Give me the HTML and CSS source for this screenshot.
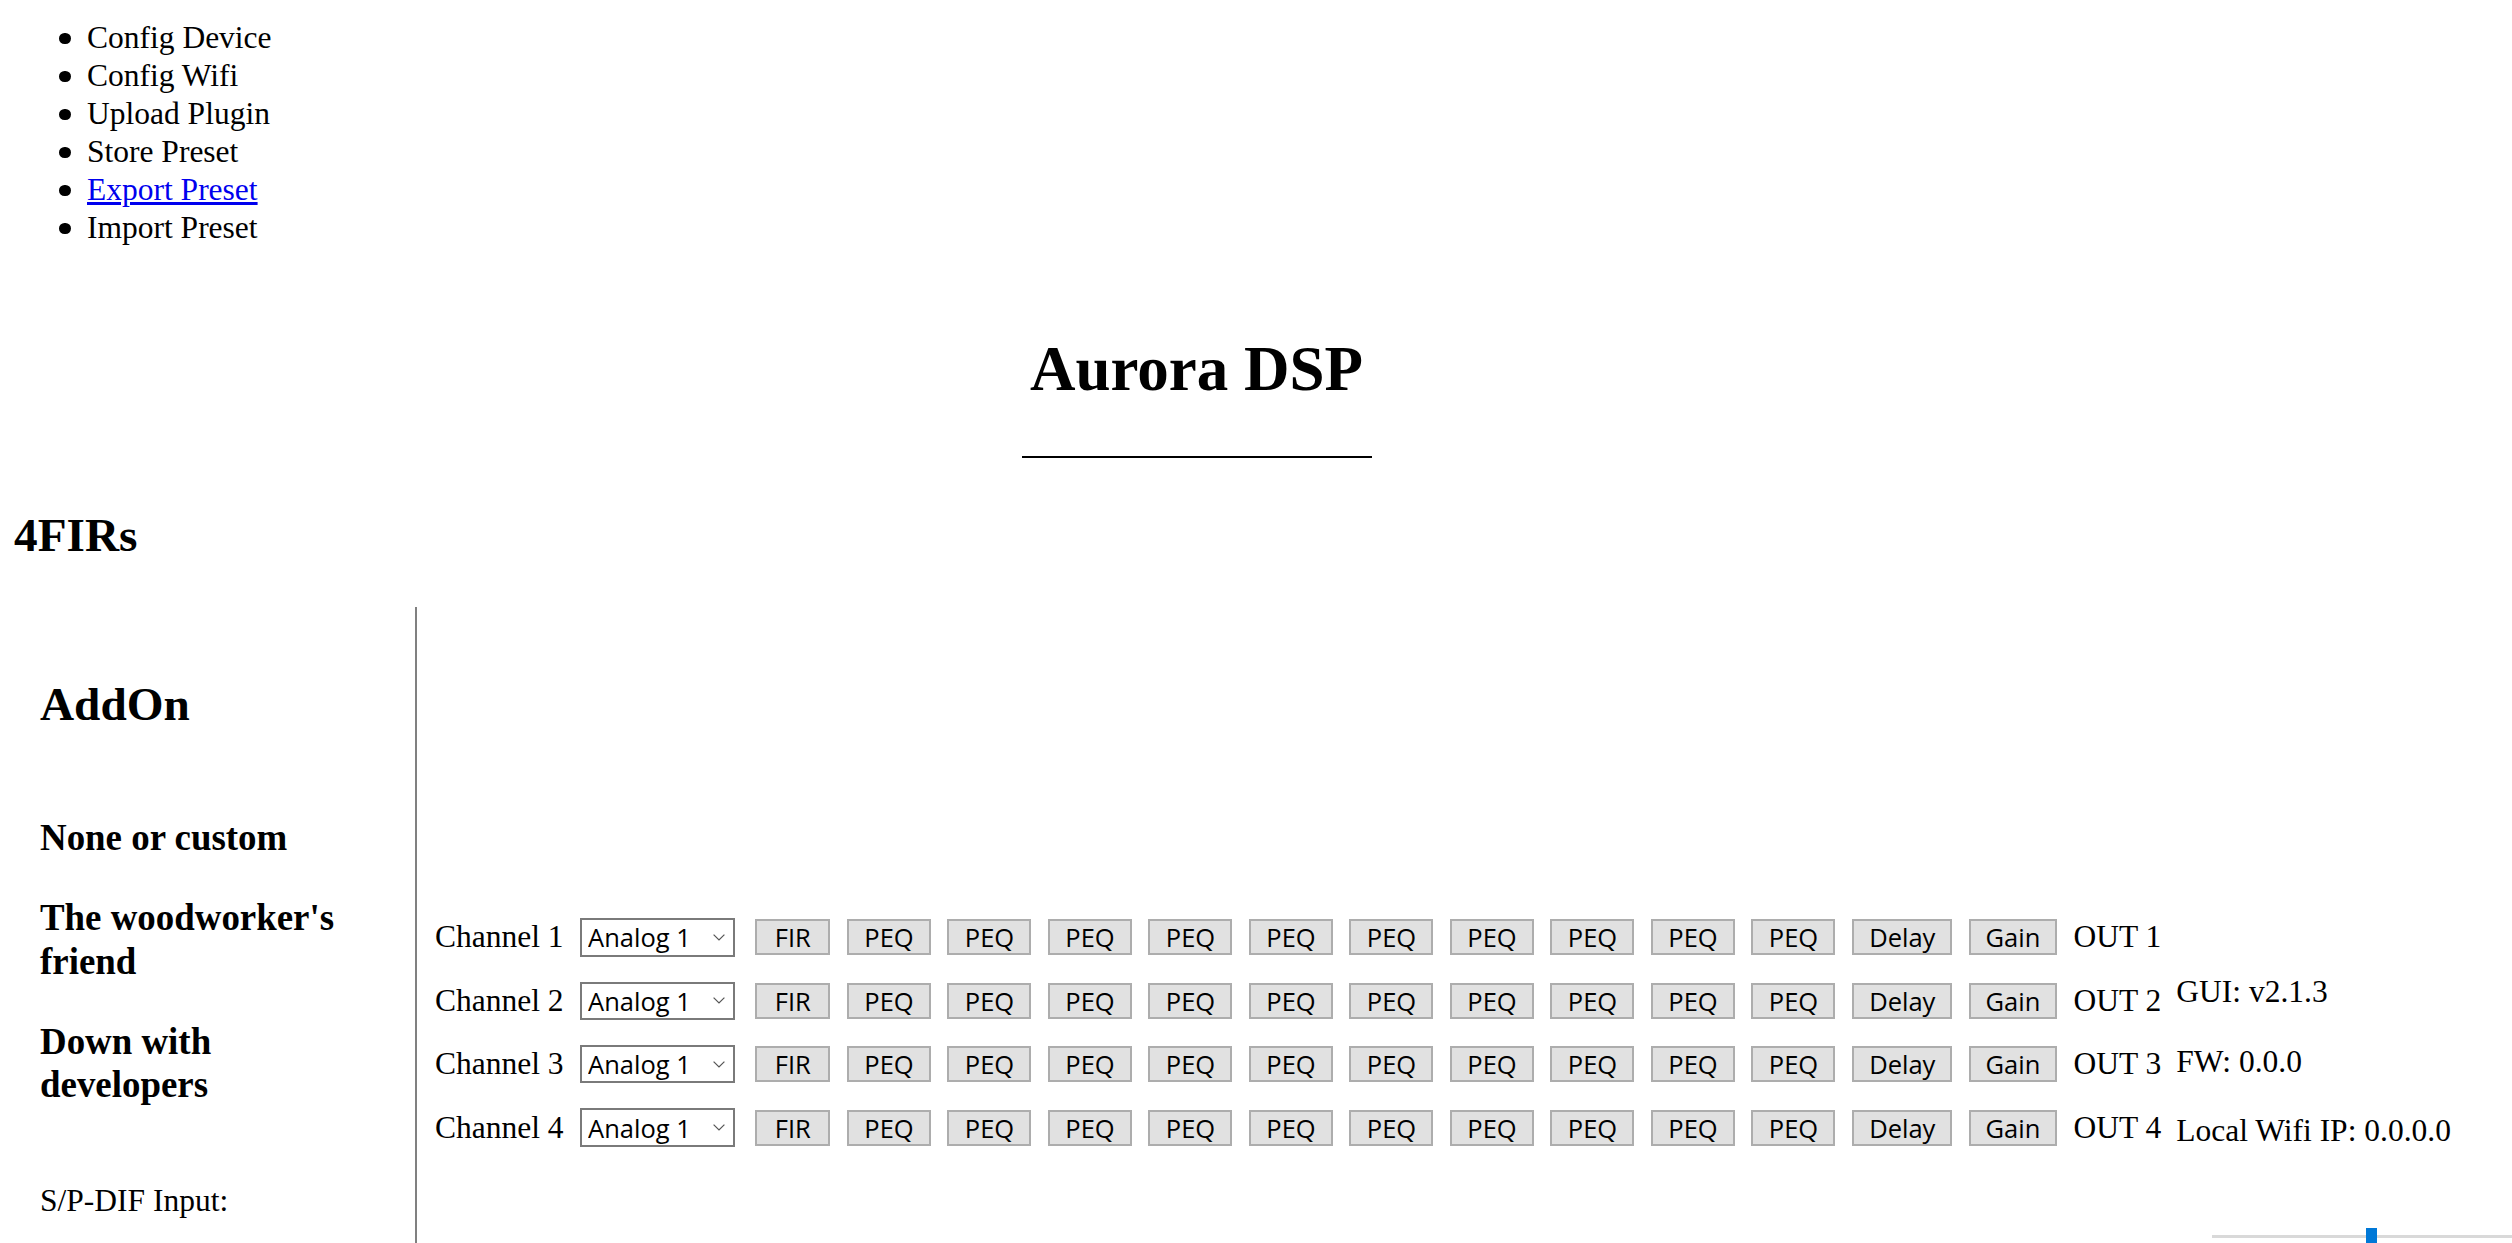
FILE: index.html
```html
<!DOCTYPE html>
<html lang="en">
<head>
<meta charset="utf-8">
<title>Aurora DSP</title>
<link rel="stylesheet" href="styles.css">
</head>
<body>
<ul class="menu">
  <li>Config Device</li>
  <li>Config Wifi</li>
  <li>Upload Plugin</li>
  <li>Store Preset</li>
  <li><a href="#">Export Preset</a></li>
  <li>Import Preset</li>
</ul>

<header class="title">
  <h1>Aurora DSP</h1>
  <hr class="rule">
</header>

<h2 class="model">4FIRs</h2>

<div class="layout">
  <aside class="sidebar">
    <h2 class="sidebar-title">AddOn</h2>
    <h3 class="addon addon-first">None or custom</h3>
    <h3 class="addon">The woodworker's friend</h3>
    <h3 class="addon">Down with developers</h3>
    <div class="spdif">S/P-DIF Input:</div>
  </aside>

  <main class="main">
    <div class="channels">
      <div class="row">
        <span class="label">Channel 1</span>
        <span class="select-wrap"><select class="select"><option>Analog 1</option></select><svg class="chev" viewBox="0 0 12 7" width="12" height="7"><polyline points="0.6,0.6 6,6 11.4,0.6" fill="none" stroke="#555" stroke-width="1.2"/></svg></span>
        <button class="btn btn-fir">FIR</button>
        <button class="btn btn-peq">PEQ</button><button class="btn btn-peq">PEQ</button><button class="btn btn-peq">PEQ</button><button class="btn btn-peq">PEQ</button><button class="btn btn-peq">PEQ</button><button class="btn btn-peq">PEQ</button><button class="btn btn-peq">PEQ</button><button class="btn btn-peq">PEQ</button><button class="btn btn-peq">PEQ</button><button class="btn btn-peq">PEQ</button>
        <button class="btn btn-delay">Delay</button>
        <button class="btn btn-gain">Gain</button>
        <span class="label">OUT 1</span>
      </div>
      <div class="row">
        <span class="label">Channel 2</span>
        <span class="select-wrap"><select class="select"><option>Analog 1</option></select><svg class="chev" viewBox="0 0 12 7" width="12" height="7"><polyline points="0.6,0.6 6,6 11.4,0.6" fill="none" stroke="#555" stroke-width="1.2"/></svg></span>
        <button class="btn btn-fir">FIR</button>
        <button class="btn btn-peq">PEQ</button><button class="btn btn-peq">PEQ</button><button class="btn btn-peq">PEQ</button><button class="btn btn-peq">PEQ</button><button class="btn btn-peq">PEQ</button><button class="btn btn-peq">PEQ</button><button class="btn btn-peq">PEQ</button><button class="btn btn-peq">PEQ</button><button class="btn btn-peq">PEQ</button><button class="btn btn-peq">PEQ</button>
        <button class="btn btn-delay">Delay</button>
        <button class="btn btn-gain">Gain</button>
        <span class="label">OUT 2</span>
      </div>
      <div class="row">
        <span class="label">Channel 3</span>
        <span class="select-wrap"><select class="select"><option>Analog 1</option></select><svg class="chev" viewBox="0 0 12 7" width="12" height="7"><polyline points="0.6,0.6 6,6 11.4,0.6" fill="none" stroke="#555" stroke-width="1.2"/></svg></span>
        <button class="btn btn-fir">FIR</button>
        <button class="btn btn-peq">PEQ</button><button class="btn btn-peq">PEQ</button><button class="btn btn-peq">PEQ</button><button class="btn btn-peq">PEQ</button><button class="btn btn-peq">PEQ</button><button class="btn btn-peq">PEQ</button><button class="btn btn-peq">PEQ</button><button class="btn btn-peq">PEQ</button><button class="btn btn-peq">PEQ</button><button class="btn btn-peq">PEQ</button>
        <button class="btn btn-delay">Delay</button>
        <button class="btn btn-gain">Gain</button>
        <span class="label">OUT 3</span>
      </div>
      <div class="row">
        <span class="label">Channel 4</span>
        <span class="select-wrap"><select class="select"><option>Analog 1</option></select><svg class="chev" viewBox="0 0 12 7" width="12" height="7"><polyline points="0.6,0.6 6,6 11.4,0.6" fill="none" stroke="#555" stroke-width="1.2"/></svg></span>
        <button class="btn btn-fir">FIR</button>
        <button class="btn btn-peq">PEQ</button><button class="btn btn-peq">PEQ</button><button class="btn btn-peq">PEQ</button><button class="btn btn-peq">PEQ</button><button class="btn btn-peq">PEQ</button><button class="btn btn-peq">PEQ</button><button class="btn btn-peq">PEQ</button><button class="btn btn-peq">PEQ</button><button class="btn btn-peq">PEQ</button><button class="btn btn-peq">PEQ</button>
        <button class="btn btn-delay">Delay</button>
        <button class="btn btn-gain">Gain</button>
        <span class="label">OUT 4</span>
      </div>
    </div>

    <div class="info">
      <p class="info-line">GUI: v2.1.3</p>
      <p class="info-line">FW: 0.0.0</p>
      <p class="info-line">Local Wifi IP: 0.0.0.0</p>
      <input class="slider" type="range" min="0" max="100" value="50">
    </div>
  </main>
</div>
</body>
</html>
```

FILE: styles.css
```css
html {
  overflow: hidden;
  background: #fff;
}

body {
  margin: 0;
  padding: 0 14px;
  font-family: "Liberation Serif", "Times New Roman", serif;
  font-size: 31.5px;
  line-height: 38px;
  color: #000;
  background: #fff;
}

/* top menu */
.menu {
  margin: 19px 0 0;
  padding-left: 73px;
  list-style: none;
}

.menu li::before {
  content: "";
  display: inline-block;
  width: 11.4px;
  height: 11.4px;
  margin: 0 16.3px 0 -27.7px;
  border-radius: 50%;
  background: #000;
  vertical-align: 3.8px;
}

.menu a {
  color: #0000ee;
}

/* title block */
.title {
  width: 2365px;
  text-align: center;
}

.title h1 {
  margin: 86px 0 0;
  font-size: 63px;
  line-height: 72.4px;
  font-weight: bold;
}

.rule {
  width: 350px;
  height: 2px;
  margin: 50.5px auto 0;
  border: 0;
  background: #000;
}

.model {
  margin: 49.6px 0 0;
  font-size: 47.25px;
  line-height: 54.3px;
  font-weight: bold;
}

/* two-column layout */
.layout {
  display: flex;
  margin-top: 45.1px;
  min-height: 900px;
}

.sidebar {
  flex: none;
  width: 403px;
  box-sizing: border-box;
  padding: 0 30px 0 26px;
  border-right: 2px solid #808080;
}

.sidebar-title {
  margin: 69.9px 0 0;
  font-size: 47.25px;
  line-height: 54.3px;
  font-weight: bold;
}

.addon {
  margin: 36.3px 0 0;
  font-size: 36.9px;
  line-height: 43.5px;
  font-weight: bold;
}

.addon-first {
  margin-top: 85.4px;
}

.spdif {
  margin-top: 75.6px;
}

/* main area */
.main {
  flex: 1;
  display: flex;
  align-items: flex-start;
  padding-left: 18px;
}

.channels {
  display: flex;
  flex-direction: column;
  gap: 25px;
  margin-top: 311.3px;
}

.row {
  display: flex;
  align-items: center;
  gap: 16.5px;
  height: 38.4px;
  white-space: nowrap;
}

.label {
  display: block;
}

.select-wrap {
  position: relative;
  display: block;
  margin-right: 4.1px;
}

.select {
  display: block;
  -webkit-appearance: none;
  appearance: none;
  width: 154.4px;
  height: 38.4px;
  box-sizing: border-box;
  margin: 0;
  padding: 0 0 0 6px;
  border: 2px solid #7a7a7a;
  border-radius: 0;
  background: #fff;
  color: #000;
  font-family: "Open Sans", "Noto Sans", sans-serif;
  font-size: 25.5px;
}

.chev {
  position: absolute;
  right: 10px;
  top: 50%;
  margin-top: -3.5px;
  pointer-events: none;
}

.btn {
  display: block;
  height: 36px;
  box-sizing: border-box;
  margin: 0;
  padding: 0;
  border: 2px solid #adadad;
  border-radius: 0;
  background: #e1e1e1;
  color: #000;
  font-family: "Open Sans", "Noto Sans", sans-serif;
  font-size: 25.5px;
  line-height: 32px;
  text-align: center;
}

.btn-fir { width: 75.4px; }
.btn-peq { width: 84px; }
.btn-delay { width: 100.5px; }
.btn-gain { width: 88px; }

/* info column */
.info {
  display: flex;
  flex-direction: column;
  align-items: flex-start;
  gap: 31.5px;
  margin-top: 366.4px;
  margin-left: 15px;
}

.info-line {
  margin: 0;
  white-space: nowrap;
}

.slider {
  -webkit-appearance: none;
  appearance: none;
  display: block;
  width: 319px;
  height: 18px;
  margin: 45.8px 0 0 35.5px;
  padding: 0;
  background: transparent;
}

.slider::-webkit-slider-runnable-track {
  height: 3px;
  background: #d9d9d9;
  border: 0;
}

.slider::-webkit-slider-thumb {
  -webkit-appearance: none;
  appearance: none;
  width: 11px;
  height: 18px;
  margin-top: -7.5px;
  border: 0;
  border-radius: 0;
  background: #0078d7;
}

.slider::-moz-range-track {
  height: 3px;
  background: #d9d9d9;
  border: 0;
}

.slider::-moz-range-thumb {
  width: 11px;
  height: 18px;
  border: 0;
  border-radius: 0;
  background: #0078d7;
}
```
